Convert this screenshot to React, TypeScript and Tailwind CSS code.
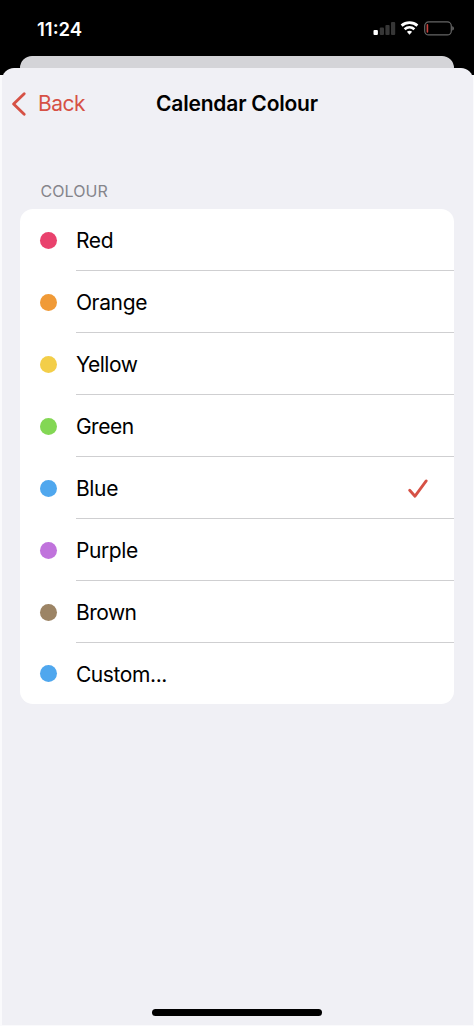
import React from "react";

type Option = { name: string; dot: string; selected?: boolean; tracking: string };

const options: Option[] = [
  { name: "Red", dot: "bg-[#e9426d]", tracking: "tracking-[-0.3px]" },
  { name: "Orange", dot: "bg-[#f09a37]", tracking: "tracking-[-0.35px]" },
  { name: "Yellow", dot: "bg-[#f3ce49]", tracking: "tracking-[-0.5px]" },
  { name: "Green", dot: "bg-[#83d754]", tracking: "tracking-[-0.45px]" },
  { name: "Blue", dot: "bg-[#4fa7ee]", selected: true, tracking: "tracking-[-0.3px]" },
  { name: "Purple", dot: "bg-[#c073dc]", tracking: "tracking-[-0.4px]" },
  { name: "Brown", dot: "bg-[#9c8465]", tracking: "tracking-[-0.5px]" },
  { name: "Custom...", dot: "bg-[#4fa7ee]", tracking: "tracking-[-0.4px]" },
];

function StatusBar() {
  return (
    <div className="flex h-[56px] items-start justify-between pl-[37px] pr-[20px] text-white">
      <span className="mt-[17px] text-[18.5px] leading-[24px] font-semibold tracking-[0px]">11:24</span>
      <svg className="mt-[18px]" width="82" height="20" viewBox="0 0 82 20" fill="none">
        <rect x="1.5" y="12" width="4.4" height="5" rx="1" fill="#fff" />
        <rect x="7.8" y="9.5" width="4.2" height="7.5" rx="1" fill="#363636" />
        <rect x="13.4" y="7" width="4.2" height="10" rx="1" fill="#363636" />
        <rect x="19" y="4" width="4.2" height="13" rx="1" fill="#363636" />
        <path d="M29.6 7.6A12 12 0 0 1 45.4 7.6" stroke="#fff" strokeWidth="2.8" />
        <path d="M32.6 11.2A7.5 7.5 0 0 1 42.4 11.2" stroke="#fff" strokeWidth="2.7" />
        <path d="M34.9 13.8A4 4 0 0 1 40.1 13.8L37.5 16.8Z" fill="#fff" />
        <rect x="52.7" y="3.9" width="26.6" height="13" rx="4" stroke="#666" strokeWidth="1.2" />
        <rect x="54.6" y="6" width="1.6" height="8.8" rx="0.8" fill="#c8433e" />
        <path d="M80.3 8.2C82.3 8.8 82.3 12 80.3 12.6Z" fill="#777" />
      </svg>
    </div>
  );
}

function Row({ option, last }: { option: Option; last: boolean }) {
  return (
    <li className={`flex items-center pl-[20px] ${last ? "h-[61px]" : "h-[62px]"}`}>
      <span className={`mr-[18.5px] size-[17px] shrink-0 rounded-full ${option.dot}`} />
      <div
        className={`flex h-full flex-1 items-center justify-between pr-[26px] ${
          last ? "pt-px" : "border-b border-[#cfcfd1] pt-[2px]"
        }`}
      >
        <span className={`pt-px text-[21px] leading-[28px] ${option.tracking}`}>{option.name}</span>
        {option.selected && (
          <svg width="20" height="20" viewBox="0 0 20 20" fill="none">
            <path d="M1.7 11.2L7 17.2L18.2 1.9" stroke="#d65145" strokeWidth="2.8" strokeLinecap="round" strokeLinejoin="round" />
          </svg>
        )}
      </div>
    </li>
  );
}

export default function App() {
  return (
    <div className="flex h-[1026px] w-[474px] flex-col bg-[linear-gradient(to_bottom,#000_75px,#fafafc_75px)] font-['Inter','Liberation_Sans',sans-serif] text-black">
      <StatusBar />
      <div className="mx-[20px] h-[12px] shrink-0 bg-black">
        <div className="h-full rounded-t-[12px] bg-[#d4d4d8]" />
      </div>
      <main className="mx-[1.5px] mb-px flex flex-1 flex-col rounded-t-[12px] bg-[#f0f0f5]">
        <header className="grid h-[72px] grid-cols-[1fr_auto_1fr] items-center px-[9.5px]">
          <button className="flex items-center gap-[11px] text-[#d65145]">
            <svg width="16" height="26" viewBox="0 0 16 26" fill="none">
              <path d="M13.2 2.8L2.6 13L13.2 23.2" stroke="currentColor" strokeWidth="2.9" strokeLinecap="round" strokeLinejoin="round" />
            </svg>
            <span className="text-[21px] leading-[28px] tracking-[-0.5px]">Back</span>
          </button>
          <h1 className="text-[21px] leading-[28px] font-semibold tracking-[-0.2px]">Calendar Colour</h1>
        </header>
        <section className="mt-[40px] px-[18.9px]">
          <h2 className="h-[29px] pl-[20px] text-[16px] leading-[22px] tracking-[0.1px] text-[#85858b]">COLOUR</h2>
          <ul className="overflow-hidden rounded-[13px] bg-white">
            {options.map((option, i) => (
              <Row key={option.name} option={option} last={i === options.length - 1} />
            ))}
          </ul>
        </section>
        <div className="mt-auto mb-[9px] h-[7px] w-[170px] self-center rounded-full bg-black" />
      </main>
    </div>
  );
}
